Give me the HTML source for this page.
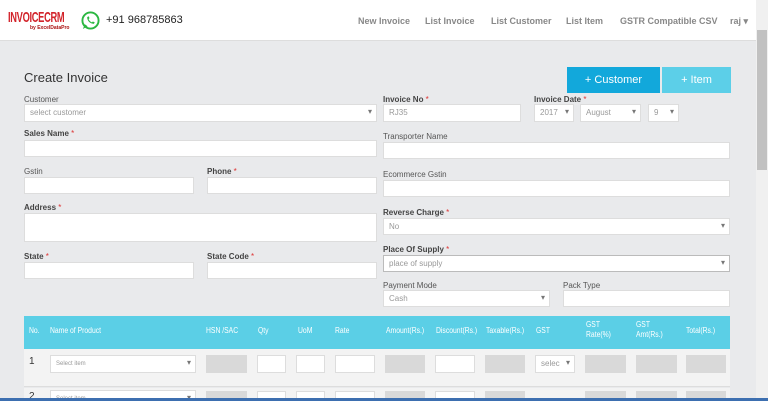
<!DOCTYPE html>
<html style="width:768px;height:401px;overflow:hidden"><head><meta charset="utf-8"><style>
*{box-sizing:border-box;margin:0;padding:0}
body{width:768px;height:401px;overflow:hidden;background:#e9eaec;font-family:"Liberation Sans",sans-serif;position:relative}
.a{position:absolute}
.nav{left:0;top:0;width:756px;height:41px;background:#fff;border-bottom:1px solid #ddd}
.nl{top:16px;font-size:9px;color:#888;font-weight:bold}
.lb{font-size:8px;color:#555}
.lb.b{font-weight:bold;color:#444}
.lb.b:after{content:" *";color:#d33;font-weight:normal}
.in{background:#fff;border:1px solid #ddd;font-size:8px;color:#999;padding:4px 5px;line-height:8px}
.sel:after{content:"▾";position:absolute;right:4px;top:3px;color:#777;font-size:8px}
.th{top:316px;height:33px;background:#5bcfe6;left:24px;width:706px}
.tt{color:#fff;font-size:8px;top:326px;transform:scaleX(0.85);transform-origin:left}
.g{background:#d9d9d9;height:18px}
.w{background:#fff;border:1px solid #ddd;height:18px}
</style></head><body>
<div class="a nav"></div>
<div class="a" style="left:8px;top:9px;color:#d2232a;font-size:15px;font-weight:bold;letter-spacing:-0.5px;transform:scaleX(0.62);transform-origin:left">INVOICECRM</div>
<div class="a" style="left:30px;top:25px;font-size:5px;color:#a11;font-weight:bold">by ExcelDataPro</div>
<svg class="a" style="left:81px;top:11px" width="19" height="19" viewBox="0 0 20 20"><circle cx="10" cy="10" r="8.5" fill="#fff" stroke="#2bb741" stroke-width="2"/><path d="M2 19 L4 14 L7 16Z" fill="#2bb741"/><path d="M6.5 6.5c0 4 3 7 7 7l1-1.5-2-1-1 1c-1.5-.6-2.8-1.8-3.5-3.5l1-1-1-2z" fill="#2bb741"/></svg>
<div class="a" style="left:106px;top:14px;font-size:11px;color:#222">+91 968785863</div>
<div class="a nl" style="left:358px">New Invoice</div>
<div class="a nl" style="left:425px">List Invoice</div>
<div class="a nl" style="left:491px">List Customer</div>
<div class="a nl" style="left:566px">List Item</div>
<div class="a nl" style="left:620px">GSTR Compatible CSV</div>
<div class="a nl" style="left:730px">raj ▾</div>
<div class="a" style="left:756px;top:0;width:12px;height:401px;background:#f0f0f0"></div>
<div class="a" style="left:757px;top:30px;width:10px;height:140px;background:#c1c1c1"></div>
<div class="a" style="left:24px;top:70px;font-size:13px;color:#333">Create Invoice</div>
<div class="a" style="left:567px;top:67px;width:93px;height:26px;background:#12a8db;color:#fff;font-size:11px;text-align:center;line-height:26px">+ Customer</div>
<div class="a" style="left:662px;top:67px;width:69px;height:26px;background:#5ccfe8;color:#fff;font-size:11px;text-align:center;line-height:26px">+ Item</div>

<div class="a lb" style="left:24px;top:95px">Customer</div>
<div class="a in sel" style="left:24px;top:104px;width:353px;height:18px">select customer</div>
<div class="a lb b" style="left:24px;top:129px">Sales Name</div>
<div class="a in" style="left:24px;top:140px;width:353px;height:17px"></div>
<div class="a lb" style="left:24px;top:167px">Gstin</div>
<div class="a in" style="left:24px;top:177px;width:170px;height:17px"></div>
<div class="a lb b" style="left:207px;top:167px">Phone</div>
<div class="a in" style="left:207px;top:177px;width:170px;height:17px"></div>
<div class="a lb b" style="left:24px;top:203px">Address</div>
<div class="a in" style="left:24px;top:213px;width:353px;height:29px"></div>
<div class="a lb b" style="left:24px;top:252px">State</div>
<div class="a in" style="left:24px;top:262px;width:170px;height:17px"></div>
<div class="a lb b" style="left:207px;top:252px">State Code</div>
<div class="a in" style="left:207px;top:262px;width:170px;height:17px"></div>

<div class="a lb b" style="left:383px;top:95px">Invoice No</div>
<div class="a in" style="left:383px;top:104px;width:138px;height:18px">RJ35</div>
<div class="a lb b" style="left:534px;top:95px">Invoice Date</div>
<div class="a in sel" style="left:534px;top:104px;width:40px;height:18px">2017</div>
<div class="a in sel" style="left:580px;top:104px;width:61px;height:18px">August</div>
<div class="a in sel" style="left:648px;top:104px;width:31px;height:18px">9</div>
<div class="a lb" style="left:383px;top:132px">Transporter Name</div>
<div class="a in" style="left:383px;top:142px;width:347px;height:17px"></div>
<div class="a lb" style="left:383px;top:170px">Ecommerce Gstin</div>
<div class="a in" style="left:383px;top:180px;width:347px;height:17px"></div>
<div class="a lb b" style="left:383px;top:208px">Reverse Charge</div>
<div class="a in sel" style="left:383px;top:218px;width:347px;height:17px">No</div>
<div class="a lb b" style="left:383px;top:245px">Place Of Supply</div>
<div class="a in sel" style="left:383px;top:255px;width:347px;height:17px;border-color:#bbb">place of supply</div>
<div class="a lb" style="left:383px;top:281px">Payment Mode</div>
<div class="a in sel" style="left:383px;top:290px;width:167px;height:17px">Cash</div>
<div class="a lb" style="left:563px;top:281px">Pack Type</div>
<div class="a in" style="left:563px;top:290px;width:167px;height:17px"></div>

<div class="a th"></div>
<div class="a tt" style="left:29px">No.</div>
<div class="a tt" style="left:50px">Name of Product</div>
<div class="a tt" style="left:206px">HSN /SAC</div>
<div class="a tt" style="left:258px">Qty</div>
<div class="a tt" style="left:298px">UoM</div>
<div class="a tt" style="left:335px">Rate</div>
<div class="a tt" style="left:386px">Amount(Rs.)</div>
<div class="a tt" style="left:436px">Discount(Rs.)</div>
<div class="a tt" style="left:486px">Taxable(Rs.)</div>
<div class="a tt" style="left:536px">GST</div>
<div class="a tt" style="left:586px;top:320px;line-height:10px">GST<br>Rate(%)</div>
<div class="a tt" style="left:636px;top:320px;line-height:10px">GST<br>Amt(Rs.)</div>
<div class="a tt" style="left:686px">Total(Rs.)</div>
<div class="a" style="left:24px;top:349px;width:706px;height:38px;background:#f3f3f3;border-bottom:1px solid #ddd"></div>
<div class="a" style="left:24px;top:388px;width:706px;height:13px;background:#f3f3f3"></div>
<div class="a" style="left:29px;top:356px;font-size:10px;color:#333">1</div>
<div class="a" style="left:29px;top:391px;font-size:10px;color:#333">2</div>
<div class="a in sel" style="left:50px;top:355px;width:146px;height:18px;font-size:6px">Select item</div>
<div class="a in sel" style="left:50px;top:390px;width:146px;height:11px;font-size:6px">Select item</div>
<div class="a g" style="left:206px;top:355px;width:41px"></div>
<div class="a w" style="left:257px;top:355px;width:29px"></div>
<div class="a w" style="left:296px;top:355px;width:29px"></div>
<div class="a w" style="left:335px;top:355px;width:40px"></div>
<div class="a g" style="left:385px;top:355px;width:40px"></div>
<div class="a w" style="left:435px;top:355px;width:40px"></div>
<div class="a g" style="left:485px;top:355px;width:40px"></div>
<div class="a in sel" style="left:535px;top:355px;width:40px;height:18px">selec</div>
<div class="a g" style="left:585px;top:355px;width:41px"></div>
<div class="a g" style="left:636px;top:355px;width:41px"></div>
<div class="a g" style="left:686px;top:355px;width:40px"></div>
<div class="a g" style="left:206px;top:391px;width:41px;height:10px"></div>
<div class="a w" style="left:257px;top:391px;width:29px;height:10px"></div>
<div class="a w" style="left:296px;top:391px;width:29px;height:10px"></div>
<div class="a w" style="left:335px;top:391px;width:40px;height:10px"></div>
<div class="a g" style="left:385px;top:391px;width:40px;height:10px"></div>
<div class="a w" style="left:435px;top:391px;width:40px;height:10px"></div>
<div class="a g" style="left:485px;top:391px;width:40px;height:10px"></div>
<div class="a g" style="left:585px;top:391px;width:41px;height:10px"></div>
<div class="a g" style="left:636px;top:391px;width:41px;height:10px"></div>
<div class="a g" style="left:686px;top:391px;width:40px;height:10px"></div>
<div class="a" style="left:0;top:398px;width:768px;height:3px;background:#3d6fb0"></div>
</body></html>
